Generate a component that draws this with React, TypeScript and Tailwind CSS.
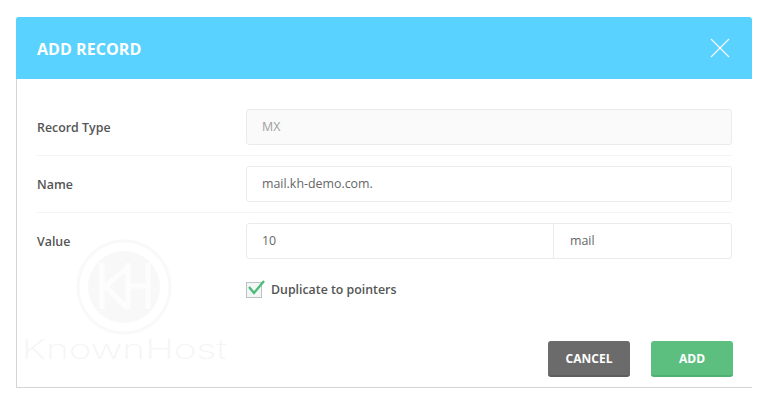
const inputBox = "h-9 rounded-[3px] border border-[#ebebeb] px-[15px] pt-[2px] flex items-center text-[12.4px] text-[#666]";

function Row({ label, children, last }: { label: string; children: React.ReactNode; last?: boolean }) {
  return (
    <div className={last ? "flex" : "flex pb-[10px] mb-[10px] border-b border-[#f4f4f4]"}>
      <div className="w-[209px] h-9 pt-[3px] flex items-center text-[12.4px] font-semibold text-[#555]">{label}</div>
      <div className="flex-1">{children}</div>
    </div>
  );
}

function Watermark() {
  return (
    <div className="absolute left-0 top-[222px] w-[214px] flex flex-col items-center pointer-events-none text-[#f5f5f5]">
      <svg width="96" height="96" viewBox="0 0 96 96" fill="none">
        <circle cx="48" cy="48" r="46" stroke="#f9f9f9" strokeWidth="3" />
        <circle cx="48" cy="48" r="36" fill="#f8f8f8" />
        <path d="M26 24v46M26 50l24-20M30 48l22 22M72 24v46M52 24v46M52 47h20" stroke="#fdfdfd" strokeWidth="5" />
      </svg>
      <div className="font-['Inter',sans-serif] font-extralight text-[27px] leading-none mt-[1px] scale-x-[1.44]">KnownHost</div>
    </div>
  );
}

export default function App() {
  return (
    <div className="w-[768px] h-[405px] bg-white pt-[17px] pl-4 font-['Open_Sans',sans-serif] overflow-hidden">
      <div className="relative w-[736px] h-[371px] bg-white rounded-t-[3px] border-l border-b border-[#d4d4d4]">
        <div className="-ml-px h-[61.5px] bg-[#59d2ff] rounded-t-[3px] flex items-center justify-between pl-[21px] pr-[22px]">
          <h2 className="pt-[2px] text-[16.1px] font-bold text-white">ADD RECORD</h2>
          <svg width="20" height="20" viewBox="0 0 20 20" fill="none" stroke="white" strokeWidth="1.1">
            <path d="M1 1l18 18M19 1L1 19" />
          </svg>
        </div>
        <Watermark />
        <div className="relative pt-[30px] pl-5 pr-[20px]">
          <Row label="Record Type">
            <div className={`${inputBox} bg-[#fafafa] text-[#a0a0a0]`}>MX</div>
          </Row>
          <Row label="Name">
            <div className={inputBox}>mail.kh-demo.com.</div>
          </Row>
          <Row label="Value" last>
            <div className="flex h-9 rounded-[3px] border border-[#ebebeb] text-[12.4px] text-[#666]">
              <div className="w-[307px] border-r border-[#ebebeb] px-[15px] pt-[2px] flex items-center">10</div>
              <div className="flex-1 px-[16px] pt-[2px] flex items-center">mail</div>
            </div>
            <div className="flex items-center mt-[22px] h-[18px]">
              <div className="relative w-4 h-4 border border-[#b9c4c9] bg-[#f4f6f6]">
                <svg width="20" height="17" viewBox="0 0 20 17" fill="none" stroke="#4cbc78" strokeWidth="2.4" className="absolute -top-[3px] left-0">
                  <path d="M2 7l5 6 10-12" />
                </svg>
              </div>
              <span className="ml-[9px] pt-[2px] text-[12.35px] font-semibold text-[#555]">Duplicate to pointers</span>
            </div>
          </Row>
          <div className="flex justify-end gap-[21px] mt-[42px] -mr-px">
            <button className="w-[82px] h-9 pt-[2px] rounded-[3px] bg-[#6b6b6b] border-b-2 border-[#5e5e5e] text-[12px] font-bold text-white">CANCEL</button>
            <button className="w-[82px] h-9 pt-[2px] rounded-[3px] bg-[#5cbf80] border-b-2 border-[#50b074] text-[12px] font-bold text-white">ADD</button>
          </div>
        </div>
      </div>
    </div>
  );
}
